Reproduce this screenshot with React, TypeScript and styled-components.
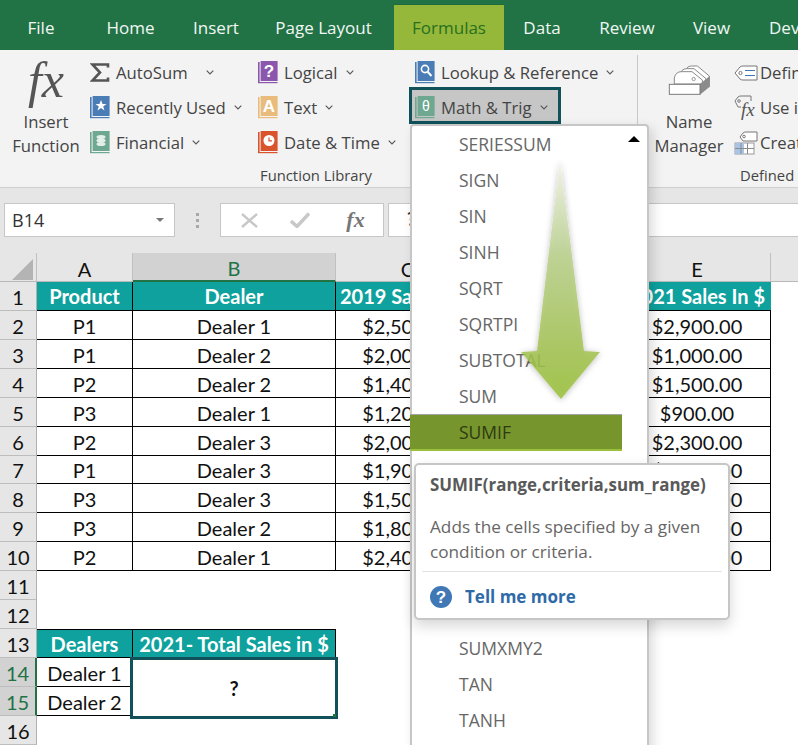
import styled, { createGlobalStyle } from 'styled-components';

const UI_FONT = '"Open Sans", "Noto Sans", sans-serif';
const SHEET_FONT = 'Lato, "Liberation Sans", sans-serif';

const GlobalStyle = createGlobalStyle`
  html, body {
    margin: 0;
    padding: 0;
    background: #fff;
  }
`;

const tabs = [
  { label: 'File', width: 82 },
  { label: 'Home', width: 97 },
  { label: 'Insert', width: 74 },
  { label: 'Page Layout', width: 141 },
  { label: 'Formulas', width: 110, active: true },
  { label: 'Data', width: 76 },
  { label: 'Review', width: 94 },
  { label: 'View', width: 75 },
];

// rows hidden behind the tooltip keep their place but have no visible label
const menuItems = [
  'SERIESSUM',
  'SIGN',
  'SIN',
  'SINH',
  'SQRT',
  'SQRTPI',
  'SUBTOTAL',
  'SUM',
  'SUMIF',
  '',
  '',
  '',
  '',
  '',
  'SUMXMY2',
  'TAN',
  'TANH',
];

const salesRows = [
  ['P1', 'Dealer 1', '$2,500.00', '$2,900.00'],
  ['P1', 'Dealer 2', '$2,000.00', '$1,000.00'],
  ['P2', 'Dealer 2', '$1,400.00', '$1,500.00'],
  ['P3', 'Dealer 1', '$1,200.00', '$900.00'],
  ['P2', 'Dealer 3', '$2,000.00', '$2,300.00'],
  ['P1', 'Dealer 3', '$1,900.00', '$1,800.00'],
  ['P3', 'Dealer 3', '$1,500.00', '$1,400.00'],
  ['P3', 'Dealer 2', '$1,800.00', '$2,000.00'],
  ['P2', 'Dealer 1', '$2,400.00', '$2,100.00'],
];

const Chevron = () => (
  <ChevronSvg viewBox="0 0 8 5">
    <path d="M0.7 0.7L4 4L7.3 0.7" fill="none" stroke="#555" strokeWidth="1.1" />
  </ChevronSvg>
);

const BookIcon = ({ color, children }: { color: string; children?: React.ReactNode }) => (
  <svg width="20" height="23" viewBox="0 0 20 23">
    <rect x="0" y="1" width="1.6" height="21" fill={color} />
    <rect x="0" y="21" width="19.5" height="1.2" fill={color} />
    <rect x="2.6" y="0" width="17" height="20" fill={color} />
    {children}
  </svg>
);

const GlyphText = ({ x, y, size, children }: { x: number; y: number; size: number; children: string }) => (
  <text
    x={x}
    y={y}
    fontSize={size}
    fontWeight="700"
    textAnchor="middle"
    fontFamily='"Liberation Sans", sans-serif'
    fill="#fff"
  >
    {children}
  </text>
);

const SigmaIcon = () => (
  <svg width="20" height="23" viewBox="0 0 20 23">
    <path d="M18 6.5V3.5H2.5L10 11.5L2.5 19.5H18V16.5" fill="none" stroke="#555" strokeWidth="2.6" />
  </svg>
);

const NameManagerIcon = () => (
  <svg width="43" height="33" viewBox="22 32 129 99">
    <path d="M72 62 Q76 38 92 38 H110 L146 68 V100 H72Z" fill="#fff" stroke="#8a8a8a" strokeWidth="3" />
    <path d="M56 70 Q60 46 78 46 H100 L136 76 V100 H56Z" fill="#fff" stroke="#8a8a8a" strokeWidth="3" />
    <path d="M41 92 V74 Q45 55 62 55 H94 L125 80 V92Z" fill="#fff" stroke="#8a8a8a" strokeWidth="3" />
    <circle cx="99" cy="77" r="5" fill="#fff" stroke="#8a8a8a" strokeWidth="2.5" />
    <path d="M118 92 L147 68 V100 L118 124Z" fill="#8b8b8b" />
    <rect x="26" y="93" width="92" height="30" fill="#fff" stroke="#7b7b7b" strokeWidth="3" />
  </svg>
);

const DefineNameIcon = () => (
  <svg width="24" height="16" viewBox="0 0 24 16">
    <path d="M1 8 L6 2 Q7 1 9 1 H23 V15 H9 Q7 15 6 14Z" fill="#fff" stroke="#777" strokeWidth="1" />
    <circle cx="6.5" cy="8" r="1.6" fill="none" stroke="#777" />
    <path d="M11 5.5H21M11 10.5H21" stroke="#3f78b4" strokeWidth="1.2" />
  </svg>
);

const UseInFormulaIcon = () => (
  <svg width="24" height="26" viewBox="0 0 24 26">
    <path d="M1 6 L4 2 Q5 1 7 1 H17 V6 M1 6 L4 12 H7" fill="none" stroke="#777" />
    <circle cx="5" cy="6" r="1.3" fill="none" stroke="#777" />
    <text x="7" y="21" fontSize="19" fontStyle="italic" fontFamily='"Liberation Serif", serif' fill="#555">
      fx
    </text>
  </svg>
);

const CreateNameIcon = () => (
  <svg width="24" height="24" viewBox="0 0 24 24">
    <rect x="1" y="12" width="19" height="11" fill="#fff" stroke="#9a9a9a" />
    <rect x="1" y="12" width="9" height="11" fill="#a9c4e4" />
    <path d="M1 17.5H20M7 12V23M13.5 12V23" stroke="#8a8a8a" fill="none" />
    <path d="M6 6 L9 2 Q10 1 12 1 H23 V10 H9 Z" fill="#fff" stroke="#777" />
    <circle cx="10" cy="5.5" r="1.3" fill="none" stroke="#777" />
  </svg>
);

const CornerTriangle = () => (
  <CornerSvg viewBox="0 0 21 21">
    <polygon points="21,0 21,21 0,21" fill="#b4b4b4" />
  </CornerSvg>
);

const GreenArrow = () => (
  <ArrowSvg viewBox="515 155 92 250">
    <defs>
      <linearGradient id="arrowFill" x1="0" y1="0" x2="0" y2="1">
        <stop offset="0" stopColor="#f1f4e9" />
        <stop offset="0.4" stopColor="#b9d08b" />
        <stop offset="0.8" stopColor="#a3c251" />
        <stop offset="1" stopColor="#99c03a" />
      </linearGradient>
      <filter id="arrowShadow" x="-30%" y="-5%" width="160%" height="115%">
        <feDropShadow dx="0" dy="1" stdDeviation="3" floodColor="#000" floodOpacity="0.3" />
      </filter>
    </defs>
    <polygon
      points="560,160 584,351 600,352 561,399 521,352 537,351"
      fill="url(#arrowFill)"
      fillOpacity="0.86"
      filter="url(#arrowShadow)"
    />
  </ArrowSvg>
);

const HelpIcon = () => (
  <svg width="22" height="22" viewBox="0 0 22 22">
    <circle cx="11" cy="11" r="11" fill="#3f78b4" />
    <GlyphText x={11} y={17} size={17}>
      ?
    </GlyphText>
  </svg>
);

export default function App() {
  return (
    <Screen>
      <GlobalStyle />

      <TabBar>
        {tabs.map((tab) => (
          <Tab key={tab.label} $width={tab.width} $active={tab.active}>
            {tab.label}
          </Tab>
        ))}
        <LastTab>Developer</LastTab>
      </TabBar>

      <Ribbon>
        <Group $width={626} $divider>
          <GroupBody>
            <BigButton $width={68}>
              <FxMark>fx</FxMark>
              <BigLabel>
                Insert
                <br />
                Function
              </BigLabel>
            </BigButton>

            <RibbonColumn $left={10} $width={168}>
              <RibbonItem>
                <IconSlot>
                  <SigmaIcon />
                </IconSlot>
                AutoSum
                <ChevronGap $gap={18}>
                  <Chevron />
                </ChevronGap>
              </RibbonItem>
              <RibbonItem>
                <IconSlot>
                  <BookIcon color="#4a7cb5">
                    <polygon
                      points="11,4 12.5,8 16.5,8 13.2,10.5 14.5,14.5 11,12 7.5,14.5 8.8,10.5 5.5,8 9.5,8"
                      fill="#fff"
                    />
                  </BookIcon>
                </IconSlot>
                Recently Used
                <ChevronGap>
                  <Chevron />
                </ChevronGap>
              </RibbonItem>
              <RibbonItem>
                <IconSlot>
                  <BookIcon color="#6fa890">
                    <ellipse cx="11" cy="6" rx="4.5" ry="2" fill="#e4efe9" />
                    <ellipse cx="11" cy="9.5" rx="4.5" ry="2" fill="#e4efe9" />
                    <ellipse cx="11" cy="13" rx="4.5" ry="2" fill="#e4efe9" />
                  </BookIcon>
                </IconSlot>
                Financial
                <ChevronGap>
                  <Chevron />
                </ChevronGap>
              </RibbonItem>
            </RibbonColumn>

            <RibbonColumn $width={157}>
              <RibbonItem>
                <IconSlot>
                  <BookIcon color="#8a57ad">
                    <GlyphText x={11} y={16} size={17}>
                      ?
                    </GlyphText>
                  </BookIcon>
                </IconSlot>
                Logical
                <ChevronGap>
                  <Chevron />
                </ChevronGap>
              </RibbonItem>
              <RibbonItem>
                <IconSlot>
                  <BookIcon color="#e9bc7c">
                    <GlyphText x={11} y={16} size={17}>
                      A
                    </GlyphText>
                  </BookIcon>
                </IconSlot>
                Text
                <ChevronGap>
                  <Chevron />
                </ChevronGap>
              </RibbonItem>
              <RibbonItem>
                <IconSlot>
                  <BookIcon color="#d9532d">
                    <circle cx="11" cy="9.5" r="5.5" fill="#fff" />
                    <path d="M11 6.5V9.8H14" fill="none" stroke="#d9532d" strokeWidth="1.2" />
                  </BookIcon>
                </IconSlot>
                Date &amp; Time
                <ChevronGap>
                  <Chevron />
                </ChevronGap>
              </RibbonItem>
            </RibbonColumn>

            <RibbonColumn>
              <RibbonItem>
                <IconSlot>
                  <BookIcon color="#4a7cb5">
                    <circle cx="10" cy="8" r="3.6" fill="none" stroke="#fff" strokeWidth="1.6" />
                    <path d="M12.6 10.8L16.5 15" stroke="#fff" strokeWidth="2" />
                  </BookIcon>
                </IconSlot>
                Lookup &amp; Reference
                <ChevronGap>
                  <Chevron />
                </ChevronGap>
              </RibbonItem>
              <ActiveRibbonItem>
                <IconSlot>
                  <BookIcon color="#6fa890">
                    <text
                      x="11"
                      y="15"
                      fontSize="14"
                      textAnchor="middle"
                      fontFamily='"Liberation Sans", sans-serif'
                      fill="#fff"
                    >
                      θ
                    </text>
                  </BookIcon>
                </IconSlot>
                Math &amp; Trig
                <ChevronGap>
                  <Chevron />
                </ChevronGap>
              </ActiveRibbonItem>
            </RibbonColumn>
          </GroupBody>
          <GroupLabel $left={248}>Function Library</GroupLabel>
        </Group>

        <Group $left={9}>
          <GroupBody>
            <BigButton $width={84}>
              <NameIconSlot>
                <NameManagerIcon />
              </NameIconSlot>
              <BigLabel>
                Name
                <br />
                Manager
              </BigLabel>
            </BigButton>
            <RibbonColumn>
              <RibbonItem>
                <NamesIconSlot>
                  <DefineNameIcon />
                </NamesIconSlot>
                Define Name
              </RibbonItem>
              <RibbonItem>
                <NamesIconSlot>
                  <UseInFormulaIcon />
                </NamesIconSlot>
                Use in Formula
              </RibbonItem>
              <RibbonItem>
                <NamesIconSlot>
                  <CreateNameIcon />
                </NamesIconSlot>
                Create from Selection
              </RibbonItem>
            </RibbonColumn>
          </GroupBody>
          <GroupLabel $left={93}>Defined Names</GroupLabel>
        </Group>
      </Ribbon>

      <FormulaBar>
        <NameBox>
          B14
          <NameCaret />
        </NameBox>
        <Grip>
          <GripDot />
          <GripDot />
          <GripDot />
        </Grip>
        <FxBox>
          <svg width="17" height="15" viewBox="0 0 17 15">
            <path d="M1 1L16 14M16 1L1 14" stroke="#c8c8c8" strokeWidth="2.4" />
          </svg>
          <svg width="20" height="16" viewBox="0 0 20 16">
            <path d="M1 9L7 14.5L19 1.5" fill="none" stroke="#c8c8c8" strokeWidth="3.4" />
          </svg>
          <FxSmall>fx</FxSmall>
        </FxBox>
        <FormulaInput>?</FormulaInput>
      </FormulaBar>

      <Sheet>
        <SelectAll>
          <CornerTriangle />
        </SelectAll>
        <ColHead>A</ColHead>
        <ColHead $selected>B</ColHead>
        <ColHead>C</ColHead>
        <ColHead>D</ColHead>
        <ColHead>E</ColHead>
        <ColHead $last />

        <RowHead>1</RowHead>
        <HeadCell>Product</HeadCell>
        <HeadCell>Dealer</HeadCell>
        <HeadCell>2019 Sales In $</HeadCell>
        <HeadCell />
        <HeadCell $plain>2021 Sales In $</HeadCell>
        <span />

        {salesRows.map(([product, dealer, sales2019, sales2021], index) => (
          <SheetRow key={index}>
            <RowHead>{index + 2}</RowHead>
            <DataCell>{product}</DataCell>
            <DataCell>{dealer}</DataCell>
            <DataCell>{sales2019}</DataCell>
            <DataCell />
            <DataCell>{sales2021}</DataCell>
            <span />
          </SheetRow>
        ))}

        {[11, 12].map((rowNumber) => (
          <SheetRow key={rowNumber}>
            <RowHead>{rowNumber}</RowHead>
            <BlankRow />
          </SheetRow>
        ))}

        <RowHead>13</RowHead>
        <HeadCell $top>Dealers</HeadCell>
        <HeadCell $top>2021- Total Sales in $</HeadCell>
        <BlankCells $span={4} />

        <RowHead $selected>14</RowHead>
        <DataCell>Dealer 1</DataCell>
        <SelectedCell>?</SelectedCell>
        <BlankCells $span={4} />

        <RowHead $selected>15</RowHead>
        <DataCell>Dealer 2</DataCell>
        <BlankCells $span={4} />

        <RowHead>16</RowHead>
        <BlankRow />
      </Sheet>

      <Menu>
        <MenuUp />
        {menuItems.map((item, index) => (
          <MenuItem key={index} $active={item === 'SUMIF'}>
            {item}
          </MenuItem>
        ))}
      </Menu>

      <GreenArrow />

      <Tooltip>
        <TooltipTitle>SUMIF(range,criteria,sum_range)</TooltipTitle>
        <TooltipBody>Adds the cells specified by a given condition or criteria.</TooltipBody>
        <TooltipFoot>
          <HelpIcon />
          <TellMore>Tell me more</TellMore>
        </TooltipFoot>
      </Tooltip>
    </Screen>
  );
}

const Screen = styled.div`
  position: relative;
  width: 798px;
  height: 745px;
  overflow: hidden;
  background: #fff;
  font-family: ${UI_FONT};
`;

const TabBar = styled.div`
  display: flex;
  align-items: flex-end;
  height: 50px;
  overflow: hidden;
  background: #217346;
`;

const Tab = styled.div<{ $width: number; $active?: boolean }>`
  display: flex;
  align-items: center;
  justify-content: center;
  flex: 0 0 ${({ $width }) => $width}px;
  box-sizing: border-box;
  height: ${({ $active }) => ($active ? '46px' : '50px')};
  padding-top: ${({ $active }) => ($active ? '0' : '4px')};
  background: ${({ $active }) => ($active ? '#96b83a' : 'transparent')};
  border-top: ${({ $active }) => ($active ? '1px solid #1d6a3c' : 'none')};
  color: ${({ $active }) => ($active ? '#27701f' : '#f2f7f4')};
  font-size: 17px;
  white-space: nowrap;
`;

const LastTab = styled.div`
  display: flex;
  align-items: center;
  height: 50px;
  box-sizing: border-box;
  padding: 4px 0 0 20px;
  color: #f2f7f4;
  font-size: 17px;
  white-space: nowrap;
`;

const Ribbon = styled.div`
  display: flex;
  box-sizing: border-box;
  height: 138px;
  padding: 5px 0 0 12px;
  background: #f3f3f3;
  border-bottom: 1px solid #cfcfcf;
  color: #444;
  font-size: 16.7px;
`;

const Group = styled.div<{ $width?: number; $left?: number; $divider?: boolean }>`
  display: flex;
  flex-direction: column;
  flex: 0 0 ${({ $width }) => ($width ? `${$width}px` : 'auto')};
  box-sizing: border-box;
  height: 126px;
  margin-left: ${({ $left }) => $left ?? 0}px;
  border-right: ${({ $divider }) => ($divider ? '1px solid #c8c8c8' : 'none')};
`;

const GroupBody = styled.div`
  display: flex;
  height: 105px;
`;

const GroupLabel = styled.div<{ $left: number }>`
  margin-top: 5px;
  padding-left: ${({ $left }) => $left}px;
  font-size: 14.8px;
  line-height: 20px;
  white-space: nowrap;
`;

const BigButton = styled.div<{ $width: number }>`
  display: flex;
  flex-direction: column;
  align-items: center;
  flex: 0 0 ${({ $width }) => $width}px;
`;

const FxMark = styled.div`
  height: 55px;
  color: #555;
  font-family: 'Liberation Serif', serif;
  font-size: 50px;
  font-style: italic;
  line-height: 50px;
`;

const NameIconSlot = styled.div`
  display: flex;
  align-items: flex-end;
  height: 55px;
  padding-bottom: 13px;
  box-sizing: border-box;
`;

const BigLabel = styled.div`
  font-size: 16.7px;
  line-height: 24px;
  text-align: center;
  white-space: nowrap;
`;

const RibbonColumn = styled.div<{ $left?: number; $width?: number }>`
  display: flex;
  flex-direction: column;
  flex: 0 0 ${({ $width }) => ($width ? `${$width}px` : 'auto')};
  margin-left: ${({ $left }) => $left ?? 0}px;
`;

const RibbonItem = styled.div`
  display: flex;
  align-items: center;
  height: 35px;
  white-space: nowrap;
`;

const ActiveRibbonItem = styled(RibbonItem)`
  box-sizing: border-box;
  width: 152px;
  height: 37px;
  margin: -3.5px 0 0 -6px;
  padding: 5px 0 0 3px;
  background: #c6c6c6;
  border: 3px solid #10515a;
`;

const IconSlot = styled.span`
  display: flex;
  flex: 0 0 26px;
`;

const NamesIconSlot = styled.span`
  display: flex;
  justify-content: center;
  flex: 0 0 29px;
`;

const ChevronGap = styled.span<{ $gap?: number }>`
  display: flex;
  margin-left: ${({ $gap }) => $gap ?? 8}px;
`;

const ChevronSvg = styled.svg`
  width: 8px;
  height: 5px;
`;

const FormulaBar = styled.div`
  display: flex;
  box-sizing: border-box;
  height: 65px;
  padding: 15px 0 16px 4px;
  background: #e6e6e6;
`;

const NameBox = styled.div`
  display: flex;
  align-items: center;
  justify-content: space-between;
  box-sizing: border-box;
  width: 171px;
  padding: 0 10px 0 7px;
  background: #fff;
  border: 1px solid #c6c6c6;
  color: #333;
  font-size: 18px;
`;

const NameCaret = styled.span`
  width: 0;
  height: 0;
  border-top: 4px solid #777;
  border-left: 4px solid transparent;
  border-right: 4px solid transparent;
`;

const Grip = styled.div`
  display: flex;
  flex-direction: column;
  align-items: center;
  justify-content: center;
  gap: 3px;
  flex: 0 0 45px;
`;

const GripDot = styled.span`
  width: 3px;
  height: 3px;
  background: #a8a8a8;
`;

const FxBox = styled.div`
  display: grid;
  grid-template-columns: 57px 44px 1fr;
  align-items: center;
  justify-items: center;
  box-sizing: border-box;
  width: 164px;
  background: #fff;
  border: 1px solid #c6c6c6;
`;

const FxSmall = styled.span`
  margin-left: 6px;
  color: #777;
  font-family: 'Liberation Serif', serif;
  font-size: 22px;
  font-style: italic;
  font-weight: 700;
`;

const FormulaInput = styled.div`
  flex: 1;
  box-sizing: border-box;
  margin-left: 4px;
  padding: 4px 0 0 18px;
  background: #fff;
  border: 1px solid #c6c6c6;
  border-right: none;
  color: #333;
  font-family: ${SHEET_FONT};
  font-size: 18px;
  font-weight: 700;
`;

const Sheet = styled.div`
  display: grid;
  grid-template-columns: 37px 96px 203px 144px 144px 147px 1fr;
  grid-template-rows: 29px;
  grid-auto-rows: 28.93px;
  height: 492px;
  color: #111;
  font-family: ${SHEET_FONT};
  font-size: 20px;
`;

const SheetRow = styled.div`
  display: contents;
`;

const SelectAll = styled.div`
  display: flex;
  align-items: flex-end;
  justify-content: flex-end;
  box-sizing: border-box;
  padding: 0 3px 1px 0;
  background: #e6e6e6;
  border-bottom: 1px solid #b8b8b8;
  border-right: 1px solid #c0c0c0;
`;

const CornerSvg = styled.svg`
  width: 21px;
  height: 21px;
`;

const ColHead = styled.div<{ $selected?: boolean; $last?: boolean }>`
  display: flex;
  align-items: center;
  justify-content: center;
  box-sizing: border-box;
  padding-top: 3px;
  background: ${({ $selected }) => ($selected ? '#d2d2d2' : '#e6e6e6')};
  border-right: ${({ $last }) => ($last ? 'none' : '1px solid #c0c0c0')};
  border-bottom: ${({ $selected }) => ($selected ? '2px solid #217346' : '1px solid #b8b8b8')};
  color: ${({ $selected }) => ($selected ? '#217346' : '#111')};
`;

const RowHead = styled.div<{ $selected?: boolean }>`
  display: flex;
  align-items: center;
  justify-content: center;
  box-sizing: border-box;
  padding-top: 2px;
  background: ${({ $selected }) => ($selected ? '#d2d2d2' : '#e6e6e6')};
  border-right: ${({ $selected }) => ($selected ? '2px solid #217346' : '1px solid #b0b0b0')};
  border-bottom: 1px solid #bdbdbd;
  color: ${({ $selected }) => ($selected ? '#217346' : '#111')};
`;

const HeadCell = styled.div<{ $plain?: boolean; $top?: boolean }>`
  display: flex;
  align-items: center;
  justify-content: center;
  box-sizing: border-box;
  padding-top: 1px;
  overflow: hidden;
  background: #0ea19d;
  border-right: ${({ $plain }) => ($plain ? 'none' : '1px solid #000')};
  border-bottom: 1px solid #000;
  border-top: ${({ $top }) => ($top ? '1px solid #000' : 'none')};
  color: #fff;
  font-weight: 700;
  white-space: nowrap;
`;

const DataCell = styled.div`
  display: flex;
  align-items: center;
  justify-content: center;
  box-sizing: border-box;
  padding-top: 2px;
  background: #fff;
  border-right: 1px solid #000;
  border-bottom: 1px solid #000;
  white-space: nowrap;
`;

const BlankRow = styled.div`
  grid-column: 2 / -1;
`;

const BlankCells = styled.div<{ $span: number }>`
  grid-column: span ${({ $span }) => $span};
`;

const SelectedCell = styled.div`
  position: relative;
  z-index: 1;
  display: flex;
  align-items: center;
  justify-content: center;
  grid-row: span 2;
  box-sizing: border-box;
  margin: -1px -2px -3px -3px;
  background: #fff;
  border: 3px solid #10515a;
  font-weight: 700;

  &::after {
    content: '';
    position: absolute;
    right: -1px;
    bottom: -1px;
    width: 3px;
    height: 3px;
    background: #217346;
  }
`;

const Menu = styled.div`
  position: absolute;
  top: 124px;
  left: 410px;
  z-index: 2;
  box-sizing: border-box;
  width: 239px;
  height: 640px;
  background: #fff;
  border: 2px solid #c6c6c6;
  border-radius: 4px 4px 0 0;
  box-shadow: 4px 4px 12px rgba(0, 0, 0, 0.14);
  color: #666;
  font-size: 17.5px;
`;

const MenuUp = styled.span`
  position: absolute;
  top: 10px;
  left: 216px;
  width: 0;
  height: 0;
  border-bottom: 6px solid #000;
  border-left: 6px solid transparent;
  border-right: 6px solid transparent;
`;

const MenuItem = styled.div<{ $active?: boolean }>`
  display: flex;
  align-items: center;
  box-sizing: border-box;
  width: 212px;
  height: ${({ $active }) => ($active ? '37px' : '36px')};
  margin: ${({ $active }) => ($active ? '0 0 -1px -2px' : '0')};
  padding-left: ${({ $active }) => ($active ? '49px' : '47px')};
  background: ${({ $active }) => ($active ? '#76952d' : 'transparent')};
  border-top: ${({ $active }) => ($active ? '1px solid #a3a3a3' : 'none')};
  border-bottom: ${({ $active }) => ($active ? '2px solid #9bc03c' : 'none')};
  color: ${({ $active }) => ($active ? '#2f3a12' : '#666')};
  white-space: nowrap;
`;

const ArrowSvg = styled.svg`
  position: absolute;
  top: 155px;
  left: 515px;
  z-index: 3;
  width: 92px;
  height: 250px;
`;

const Tooltip = styled.div`
  position: absolute;
  top: 463px;
  left: 414px;
  z-index: 4;
  box-sizing: border-box;
  width: 316px;
  height: 157px;
  padding: 0 6px;
  background: #fff;
  border: 2px solid #c6c6c6;
  border-radius: 5px;
  box-shadow: 0 6px 14px rgba(0, 0, 0, 0.16);
  color: #666;
`;

const TooltipTitle = styled.div`
  padding: 9px 0 0 8px;
  color: #595959;
  font-size: 16.9px;
  font-weight: 700;
  line-height: 22px;
  white-space: nowrap;
`;

const TooltipBody = styled.div`
  box-sizing: border-box;
  height: 76px;
  padding: 18px 0 0 8px;
  border-bottom: 1px solid #e2e2e2;
  font-size: 17.2px;
  line-height: 25px;
`;

const TooltipFoot = styled.div`
  display: flex;
  align-items: center;
  gap: 13px;
  padding: 13px 0 0 8px;
`;

const TellMore = styled.span`
  color: #2f6aa8;
  font-size: 17px;
  font-weight: 700;
`;
